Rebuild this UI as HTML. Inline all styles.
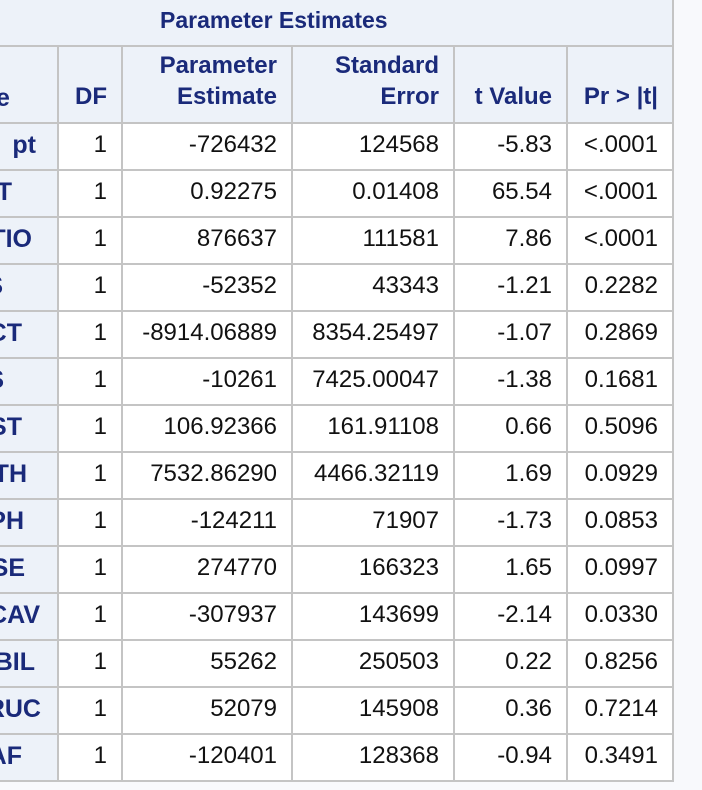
<!DOCTYPE html>
<html><head><style>
body{margin:0;width:702px;height:790px;background:#f8f9fc;position:relative;overflow:hidden;font-family:"Liberation Sans",Arial,sans-serif;}
.c{position:absolute;box-sizing:border-box;border-right:2px solid #c4c4c4;border-bottom:2px solid #c4c4c4;font-size:24px;}
.h{background:#edf2f9;color:#1a2a7a;font-weight:bold;}
.d{background:#fff;color:#111;text-align:right;}
.lab{position:absolute;font-weight:bold;color:#1a2a7a;font-size:25px;white-space:nowrap;}
</style></head><body>
<div class="c h" style="left:0;top:0;width:674px;height:47px;font-size:23px;"><span style="position:absolute;left:160px;top:7px">Parameter Estimates</span></div>
<div id="t"></div>
<script>
var X=[-60,59,123,293,455,568,674];
var hdr=["","DF","Parameter<br>Estimate","Standard<br>Error","t Value","Pr &gt; |t|"];
var H='';
for(var j=0;j<6;j++){H+='<div class="c h" style="left:'+X[j]+'px;top:47px;width:'+(X[j+1]-X[j])+'px;height:77px;text-align:right;padding-right:14px;line-height:31px;padding-top:'+(hdr[j].indexOf('<br>')>0?3:34)+'px;">'+hdr[j]+'</div>';}
H+='<div class="lab" style="left:-4px;top:84px">e</div>';
var rows=[["pt",36,"-726432","124568","-5.83","<.0001"],["T",12,"0.92275","0.01408","65.54","<.0001"],["TIO",32,"876637","111581","7.86","<.0001"],["S",3,"-52352","43343","-1.21","0.2282"],["CT",22,"-8914.06889","8354.25497","-1.07","0.2869"],["S",4,"-10261","7425.00047","-1.38","0.1681"],["ST",22,"106.92366","161.91108","0.66","0.5096"],["TH",27,"7532.86290","4466.32119","1.69","0.0929"],["PH",24,"-124211","71907","-1.73","0.0853"],["SE",25,"274770","166323","1.65","0.0997"],["CAV",40,"-307937","143699","-2.14","0.0330"],["BIL",35,"55262","250503","0.22","0.8256"],["RUC",41,"52079","145908","0.36","0.7214"],["AF",22,"-120401","128368","-0.94","0.3491"]];
for(var i=0;i<14;i++){var y=124+i*47;var r=rows[i];
H+='<div class="c h" style="left:-60px;top:'+y+'px;width:119px;height:47px;"></div>';
H+='<div class="lab" style="right:'+(702-r[1])+'px;top:'+(y+7)+'px">'+r[0]+'</div>';
var v=["1",r[2],r[3],r[4],r[5].replace('<','&lt;')];
for(var j=1;j<6;j++){H+='<div class="c d" style="left:'+X[j]+'px;top:'+y+'px;width:'+(X[j+1]-X[j])+'px;height:47px;line-height:42px;padding-right:14px;">'+v[j-1]+'</div>';}
}
document.getElementById('t').innerHTML=H;
</script>
</body></html>
